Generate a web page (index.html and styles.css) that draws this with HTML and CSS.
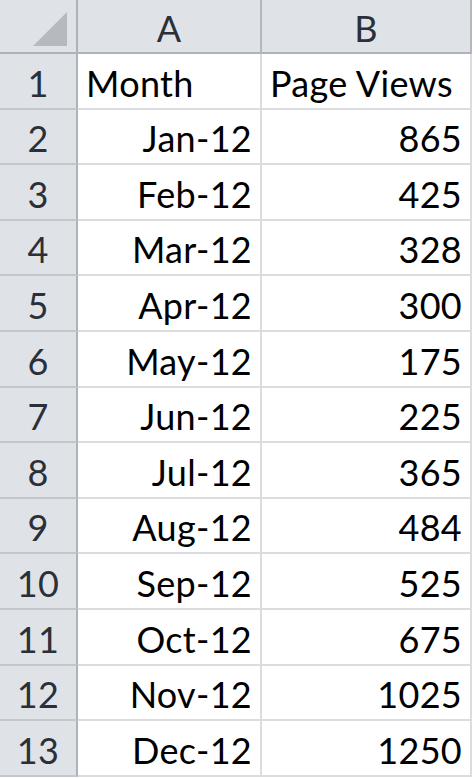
FILE: index.html
```html
<!DOCTYPE html>
<html lang="en">
<head>
<meta charset="utf-8">
<title>Page Views by Month</title>
<link rel="stylesheet" href="styles.css">
</head>
<body>
<div class="sheet">
  <div class="corner"><svg class="corner-tri" width="78" height="54" viewBox="0 0 78 54"><polygon points="33,46 67,12 67,46" fill="#b6babf"/></svg></div>
  <div class="colhead">A</div>
  <div class="colhead">B</div>

  <div class="rowhead">1</div><div class="cell left">Month</div><div class="cell left">Page Views</div>
  <div class="rowhead">2</div><div class="cell">Jan-12</div><div class="cell">865</div>
  <div class="rowhead">3</div><div class="cell">Feb-12</div><div class="cell">425</div>
  <div class="rowhead">4</div><div class="cell">Mar-12</div><div class="cell">328</div>
  <div class="rowhead">5</div><div class="cell">Apr-12</div><div class="cell">300</div>
  <div class="rowhead">6</div><div class="cell">May-12</div><div class="cell">175</div>
  <div class="rowhead">7</div><div class="cell">Jun-12</div><div class="cell">225</div>
  <div class="rowhead">8</div><div class="cell">Jul-12</div><div class="cell">365</div>
  <div class="rowhead">9</div><div class="cell">Aug-12</div><div class="cell">484</div>
  <div class="rowhead">10</div><div class="cell">Sep-12</div><div class="cell">525</div>
  <div class="rowhead">11</div><div class="cell">Oct-12</div><div class="cell">675</div>
  <div class="rowhead">12</div><div class="cell">Nov-12</div><div class="cell">1025</div>
  <div class="rowhead">13</div><div class="cell">Dec-12</div><div class="cell">1250</div>
</div>
</body>
</html>
```

FILE: styles.css
```css
html, body {
  margin: 0;
  padding: 0;
  background: #ffffff;
  overflow: hidden;
}

.sheet {
  display: grid;
  grid-template-columns: 78px 184px 210px;
  grid-template-rows: 54px;
  grid-auto-rows: 55.6px;
  font-family: Lato, "Open Sans", sans-serif;
  font-size: 36px;
  letter-spacing: 0.3px;
  line-height: 1;
  color: #000000;
}

.sheet > div {
  box-sizing: border-box;
}

.corner {
  background: #dfe3e8;
  border-right: 2px solid #aeb3b9;
  border-bottom: 2px solid #aeb3b9;
  position: relative;
}

.corner-tri {
  position: absolute;
  left: 0;
  top: 0;
}

.colhead {
  background: #dfe3e8;
  border-right: 2px solid #b3b8be;
  border-bottom: 2px solid #aeb3b9;
  color: #2b3038;
  display: flex;
  align-items: center;
  justify-content: center;
  padding-top: 4px;
}

.rowhead {
  background: #dfe3e8;
  border-right: 2px solid #aeb3b9;
  border-bottom: 2px solid #c3c7cc;
  color: #2b3038;
  display: flex;
  align-items: flex-end;
  justify-content: center;
  padding-bottom: 7px;
}

.cell {
  background: #ffffff;
  border-right: 2px solid #dadcdf;
  border-bottom: 2px solid #dadcdf;
  display: flex;
  align-items: flex-end;
  justify-content: flex-end;
  padding: 0 8px 7px 8px;
  white-space: nowrap;
}

.cell.left {
  justify-content: flex-start;
}
```
